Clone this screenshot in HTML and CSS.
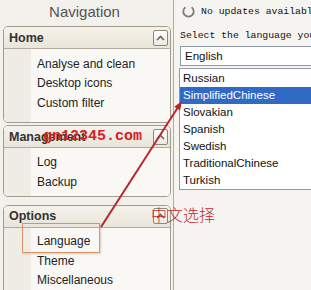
FILE: index.html
```html
<!DOCTYPE html>
<html>
<head>
<meta charset="utf-8">
<link rel="stylesheet" href="styles.css">
</head>
<body>
<div class="app">
  <nav class="nav">
    <div class="nav-title">Navigation</div>
    <section class="group g-home">
      <div class="group-head"><span>Home</span>
        <span class="collapse"><svg width="9" height="6" viewBox="0 0 9 6"><path d="M1 5 L4.5 1.5 L8 5" fill="none" stroke="#6b675e" stroke-width="1.6"/></svg></span>
      </div>
      <ul class="group-items">
        <li>Analyse and clean</li>
        <li>Desktop icons</li>
        <li>Custom filter</li>
      </ul>
    </section>
    <section class="group g-manage">
      <div class="group-head"><span>Management</span>
        <span class="collapse"><svg width="9" height="6" viewBox="0 0 9 6"><path d="M1 5 L4.5 1.5 L8 5" fill="none" stroke="#6b675e" stroke-width="1.6"/></svg></span>
      </div>
      <ul class="group-items">
        <li>Log</li>
        <li>Backup</li>
      </ul>
    </section>
    <section class="group g-options">
      <div class="group-head"><span>Options</span>
        <span class="collapse"><svg width="9" height="6" viewBox="0 0 9 6"><path d="M1 5 L4.5 1.5 L8 5" fill="none" stroke="#6b675e" stroke-width="1.6"/></svg></span>
      </div>
      <ul class="group-items">
        <li>Language</li>
        <li>Theme</li>
        <li>Miscellaneous</li>
      </ul>
    </section>
  </nav>
  <main class="main">
    <div class="status">
      <svg class="refresh" width="13" height="13" viewBox="0 0 13 13"><path d="M9.6 2.3 A5.2 5.2 0 1 1 3.4 2.3" fill="none" stroke="#7c7c7c" stroke-width="1.8"/></svg>
      <span>No updates available</span>
    </div>
    <div class="prompt">Select the language you want to use</div>
    <div class="combo">English</div>
    <ul class="listbox">
      <li>Russian</li>
      <li class="selected">SimplifiedChinese</li>
      <li>Slovakian</li>
      <li>Spanish</li>
      <li>Swedish</li>
      <li>TraditionalChinese</li>
      <li>Turkish</li>
    </ul>
  </main>
</div>
<div class="mark-box"></div>
<svg class="annot" width="311" height="290" viewBox="0 0 311 290">
  <line x1="101" y1="227" x2="177.5" y2="108" stroke="#b8262b" stroke-width="2"/>
  <polygon points="182,101 180.1,110.5 174.2,106.7" fill="#b8262b"/>
</svg>
<div class="watermark">gn12345.com</div>
<div class="note">中文选择</div>
</body>
</html>
```
FILE: styles.css
```css
* { box-sizing: border-box; }
html, body { margin: 0; padding: 0; }
body {
  width: 311px;
  height: 290px;
  overflow: hidden;
  background: #f5f4f0;
  font-family: "Liberation Sans", Arial, sans-serif;
  position: relative;
}
.app {
  display: flex;
  height: 290px;
}
.nav {
  width: 174px;
  flex: none;
  background: #f3f1ec;
  border-right: 1px solid #b3ad9f;
  display: flex;
  flex-direction: column;
  overflow: hidden;
}
.nav-title {
  flex: none;
  height: 26px;
  line-height: 24px;
  text-align: center;
  font-size: 15px;
  color: #555;
  padding-right: 4px;
}
.group {
  flex: none;
  margin-left: 3px;
  width: 168px;
  border: 1px solid #a39c8c;
  border-radius: 5px;
  background: #f9f8f5;
  overflow: hidden;
}
.g-manage { margin-top: 2px; }
.g-options { margin-top: 8px; }
.group-head {
  height: 22px;
  border-bottom: 1px solid #b3ad9f;
  background: linear-gradient(#f4f2ec, #e9e5da);
  display: flex;
  align-items: center;
  justify-content: space-between;
  padding: 0 2px 0 5px;
  font-weight: bold;
  font-size: 12.5px;
  color: #333;
}
.collapse {
  width: 15px;
  height: 16px;
  border: 1px solid #8e877a;
  border-radius: 2px;
  background: linear-gradient(#ffffff, #ebe8e0);
  display: flex;
  align-items: center;
  justify-content: center;
}
.group-items {
  list-style: none;
  margin: 0;
  padding: 5.5px 0 9px 33px;
  font-size: 12px;
  line-height: 19.5px;
  color: #222;
  background: linear-gradient(to right, #eeece5 0, #eeece5 27px, #f9f8f5 27px);
}
.g-manage .group-items { padding-top: 5px; padding-bottom: 3.5px; }
.g-options .group-items { padding-top: 4.5px; }
.main {
  flex: 1;
  min-width: 0;
  overflow: hidden;
  padding-left: 5px;
  white-space: nowrap;
}
.status {
  height: 22px;
  display: flex;
  align-items: center;
  gap: 6px;
  padding-left: 3px;
  font-family: "Liberation Mono", "Courier New", monospace;
  font-size: 9.8px;
  color: #111;
}
.refresh { flex: none; }
.prompt {
  height: 24px;
  line-height: 28px;
  padding-left: 1px;
  font-family: "Liberation Mono", "Courier New", monospace;
  font-size: 9.8px;
  color: #111;
}
.combo {
  height: 20px;
  margin-left: 1px;
  background: #fff;
  border: 1px solid #8f9aa6;
  border-right: none;
  line-height: 18px;
  padding-left: 4px;
  font-size: 11.5px;
  color: #111;
}
.listbox {
  list-style: none;
  margin: 2px 0 0 0;
  padding: 1px 0 0 0;
  background: #fff;
  border: 1px solid #8f9aa6;
  border-right: none;
  font-size: 11.5px;
  color: #111;
}
.listbox li {
  height: 17px;
  line-height: 17px;
  padding-left: 3px;
}
.listbox li.selected {
  background: #316ac5;
  color: #fff;
}
.mark-box {
  position: absolute;
  left: 22px;
  top: 223px;
  width: 78px;
  height: 30px;
  border: 1.5px solid #dc9167;
  box-shadow: 1px 1px 2px rgba(120, 80, 50, 0.25);
}
.annot {
  position: absolute;
  left: 0;
  top: 0;
  pointer-events: none;
}
.watermark {
  position: absolute;
  left: 43px;
  top: 128px;
  font-family: "Liberation Mono", "Courier New", monospace;
  font-weight: bold;
  font-size: 15px;
  line-height: 18px;
  color: #d51f1f;
}
.note {
  position: absolute;
  left: 151px;
  top: 204px;
  font-family: "Noto Sans CJK SC", sans-serif;
  font-weight: 300;
  font-size: 16px;
  line-height: 20px;
  color: #c0282c;
}
```
